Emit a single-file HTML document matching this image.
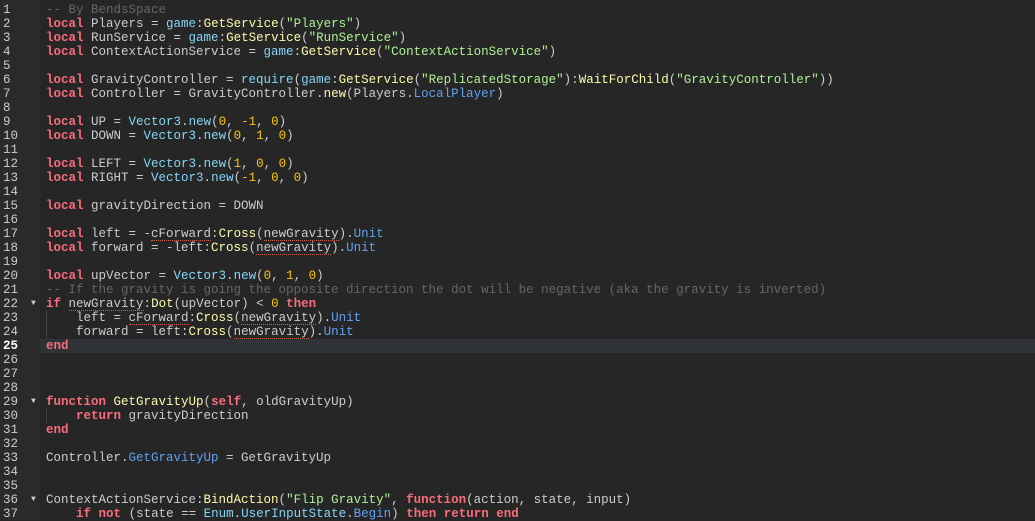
<!DOCTYPE html>
<html><head><meta charset="utf-8"><style>
body{margin:0;width:1035px;height:520px;overflow:hidden;background:#262626;font-family:"Liberation Mono","DejaVu Sans Mono",monospace;font-size:12.5px;}
#g{position:absolute;left:0;top:0;width:40px;height:520px;background:#2a2a2a;}
#c{position:absolute;left:0;top:3px;width:1035px;}
.l{height:14px;line-height:14px;white-space:pre;position:relative;color:#cccccc;}
.n{position:absolute;left:3px;width:20px;color:#cccccc;}
.t{position:absolute;left:46px;}
.hl{background:#2f3236;}
.k{color:#f86d7c;font-weight:bold}
.b{color:#84d6f7}
.f{color:#fdfbac}
.s{color:#adf195}
.m{color:#666666}
.p{color:#61a1f1}
.u{color:#ffc600}
.w{display:inline-block;height:13px;border-bottom:1px dotted #d2603a}
.a{position:absolute;left:31px;color:#ccc;font-size:8px}
.guide{position:absolute;left:46px;top:0;width:1px;height:14px;background:#444}
</style></head><body><div id="g"></div><div id="c">
<div class="l"><span class="n">1</span><span class="t m">-- By BendsSpace</span></div>
<div class="l"><span class="n">2</span><span class="t"><span class="k">local</span> Players = <span class="b">game</span>:<span class="f">GetService</span>(<span class="s">"Players"</span>)</span></div>
<div class="l"><span class="n">3</span><span class="t"><span class="k">local</span> RunService = <span class="b">game</span>:<span class="f">GetService</span>(<span class="s">"RunService"</span>)</span></div>
<div class="l"><span class="n">4</span><span class="t"><span class="k">local</span> ContextActionService = <span class="b">game</span>:<span class="f">GetService</span>(<span class="s">"ContextActionService"</span>)</span></div>
<div class="l"><span class="n">5</span></div>
<div class="l"><span class="n">6</span><span class="t"><span class="k">local</span> GravityController = <span class="b">require</span>(<span class="b">game</span>:<span class="f">GetService</span>(<span class="s">"ReplicatedStorage"</span>):<span class="f">WaitForChild</span>(<span class="s">"GravityController"</span>))</span></div>
<div class="l"><span class="n">7</span><span class="t"><span class="k">local</span> Controller = GravityController.<span class="f">new</span>(Players.<span class="p">LocalPlayer</span>)</span></div>
<div class="l"><span class="n">8</span></div>
<div class="l"><span class="n">9</span><span class="t"><span class="k">local</span> UP = <span class="b">Vector3</span>.<span class="b">new</span>(<span class="u">0</span>, <span class="u">-1</span>, <span class="u">0</span>)</span></div>
<div class="l"><span class="n">10</span><span class="t"><span class="k">local</span> DOWN = <span class="b">Vector3</span>.<span class="b">new</span>(<span class="u">0</span>, <span class="u">1</span>, <span class="u">0</span>)</span></div>
<div class="l"><span class="n">11</span></div>
<div class="l"><span class="n">12</span><span class="t"><span class="k">local</span> LEFT = <span class="b">Vector3</span>.<span class="b">new</span>(<span class="u">1</span>, <span class="u">0</span>, <span class="u">0</span>)</span></div>
<div class="l"><span class="n">13</span><span class="t"><span class="k">local</span> RIGHT = <span class="b">Vector3</span>.<span class="b">new</span>(<span class="u">-1</span>, <span class="u">0</span>, <span class="u">0</span>)</span></div>
<div class="l"><span class="n">14</span></div>
<div class="l"><span class="n">15</span><span class="t"><span class="k">local</span> gravityDirection = DOWN</span></div>
<div class="l"><span class="n">16</span></div>
<div class="l"><span class="n">17</span><span class="t"><span class="k">local</span> left = -<span class="w">cForward</span>:<span class="f">Cross</span>(<span class="w">newGravity</span>).<span class="p">Unit</span></span></div>
<div class="l"><span class="n">18</span><span class="t"><span class="k">local</span> forward = -left:<span class="f">Cross</span>(<span class="w">newGravity</span>).<span class="p">Unit</span></span></div>
<div class="l"><span class="n">19</span></div>
<div class="l"><span class="n">20</span><span class="t"><span class="k">local</span> upVector = <span class="b">Vector3</span>.<span class="b">new</span>(<span class="u">0</span>, <span class="u">1</span>, <span class="u">0</span>)</span></div>
<div class="l"><span class="n">21</span><span class="t m">-- If the gravity is going the opposite direction the dot will be negative (aka the gravity is inverted)</span></div>
<div class="l"><span class="n">22</span><span class="a">▼</span><span class="t"><span class="k">if</span> <span class="w">newGravity</span>:<span class="f">Dot</span>(upVector) &lt; <span class="u">0</span> <span class="k">then</span></span></div>
<div class="l"><span class="n">23</span><span class="guide"></span><span class="t">    left = <span class="w">cForward</span>:<span class="f">Cross</span>(<span class="w">newGravity</span>).<span class="p">Unit</span></span></div>
<div class="l"><span class="n">24</span><span class="guide"></span><span class="t">    forward = left:<span class="f">Cross</span>(<span class="w">newGravity</span>).<span class="p">Unit</span></span></div>
<div class="l"><span class="n" style="font-weight:bold;color:#fff">25</span><span class="t hl" style="left:40px;width:995px;padding-left:6px"><span class="k">end</span></span></div>
<div class="l"><span class="n">26</span></div>
<div class="l"><span class="n">27</span></div>
<div class="l"><span class="n">28</span></div>
<div class="l"><span class="n">29</span><span class="a">▼</span><span class="t"><span class="k">function</span> <span class="f">GetGravityUp</span>(<span class="k">self</span>, oldGravityUp)</span></div>
<div class="l"><span class="n">30</span><span class="guide"></span><span class="t">    <span class="k">return</span> gravityDirection</span></div>
<div class="l"><span class="n">31</span><span class="t"><span class="k">end</span></span></div>
<div class="l"><span class="n">32</span></div>
<div class="l"><span class="n">33</span><span class="t">Controller.<span class="p">GetGravityUp</span> = GetGravityUp</span></div>
<div class="l"><span class="n">34</span></div>
<div class="l"><span class="n">35</span></div>
<div class="l"><span class="n">36</span><span class="a">▼</span><span class="t">ContextActionService:<span class="f">BindAction</span>(<span class="s">"Flip Gravity"</span>, <span class="k">function</span>(action, state, input)</span></div>
<div class="l"><span class="n">37</span><span class="t">    <span class="k">if</span> <span class="k">not</span> (state == <span class="b">Enum</span>.<span class="b">UserInputState</span>.<span class="p">Begin</span>) <span class="k">then</span> <span class="k">return</span> <span class="k">end</span></span></div>
</div></body></html>
